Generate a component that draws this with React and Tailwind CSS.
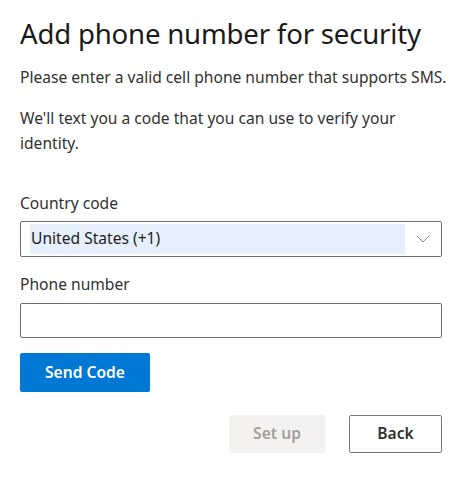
import React from 'react';

const Chevron = () => (
  <svg width="14" height="8" viewBox="0 0 14 8" fill="none" className="text-[#8a8886]">
    <polyline points="1,1 7,7 13,1" stroke="currentColor" strokeWidth="1" />
  </svg>
);

const App = () => {
  return (
    <div className="w-[474px] h-[492px] bg-white px-5 font-['Noto_Sans',sans-serif] text-[#323130]">
      <h1 className="pt-[15px] text-[27.6px] leading-[36px] text-[#1b1b1b] tracking-[-0.2px]">
        Add phone number for security
      </h1>
      <p className="mt-[14px] text-[15.6px] leading-6">
        Please enter a valid cell phone number that supports SMS.
      </p>
      <p className="mt-[17px] text-[15.6px] leading-[25px] w-[422px]">
        We'll text you a code that you can use to verify your identity.
      </p>

      <label className="block mt-[36px] text-[15.6px] leading-[22px]">Country code</label>
      <div className="mt-[7px] h-9 w-[422px] border border-[#6f6e6d] rounded-[2px] flex items-center pl-[9px]">
        <div className="w-[375px] h-[30px] bg-[#e6effc] flex items-center pl-px text-[15.6px] text-[#201f1e]">
          United States (+1)
        </div>
        <div className="flex-1 flex justify-center pr-px">
          <Chevron />
        </div>
      </div>

      <label className="block mt-4 text-[15.6px] leading-[22px]">Phone number</label>
      <input
        type="text"
        className="mt-2 block h-[35px] w-[422px] border border-[#6f6e6d] rounded-[2px] outline-none px-2"
      />

      <button className="mt-[15px] h-[39px] w-[130px] bg-[#0078d4] text-white text-[15.6px] font-semibold rounded-[2px]">
        Send Code
      </button>

      <div className="mt-[23px] w-[422px] flex justify-end gap-6">
        <button className="h-[38px] w-[96px] bg-[#f3f2f1] text-[#a19f9d] text-[15.6px] font-semibold rounded-[2px]">
          Set up
        </button>
        <button className="h-[38px] w-[93px] border border-[#7a7978] text-[#323130] text-[15.6px] font-semibold rounded-[2px]">
          Back
        </button>
      </div>
    </div>
  );
};

export default App;
